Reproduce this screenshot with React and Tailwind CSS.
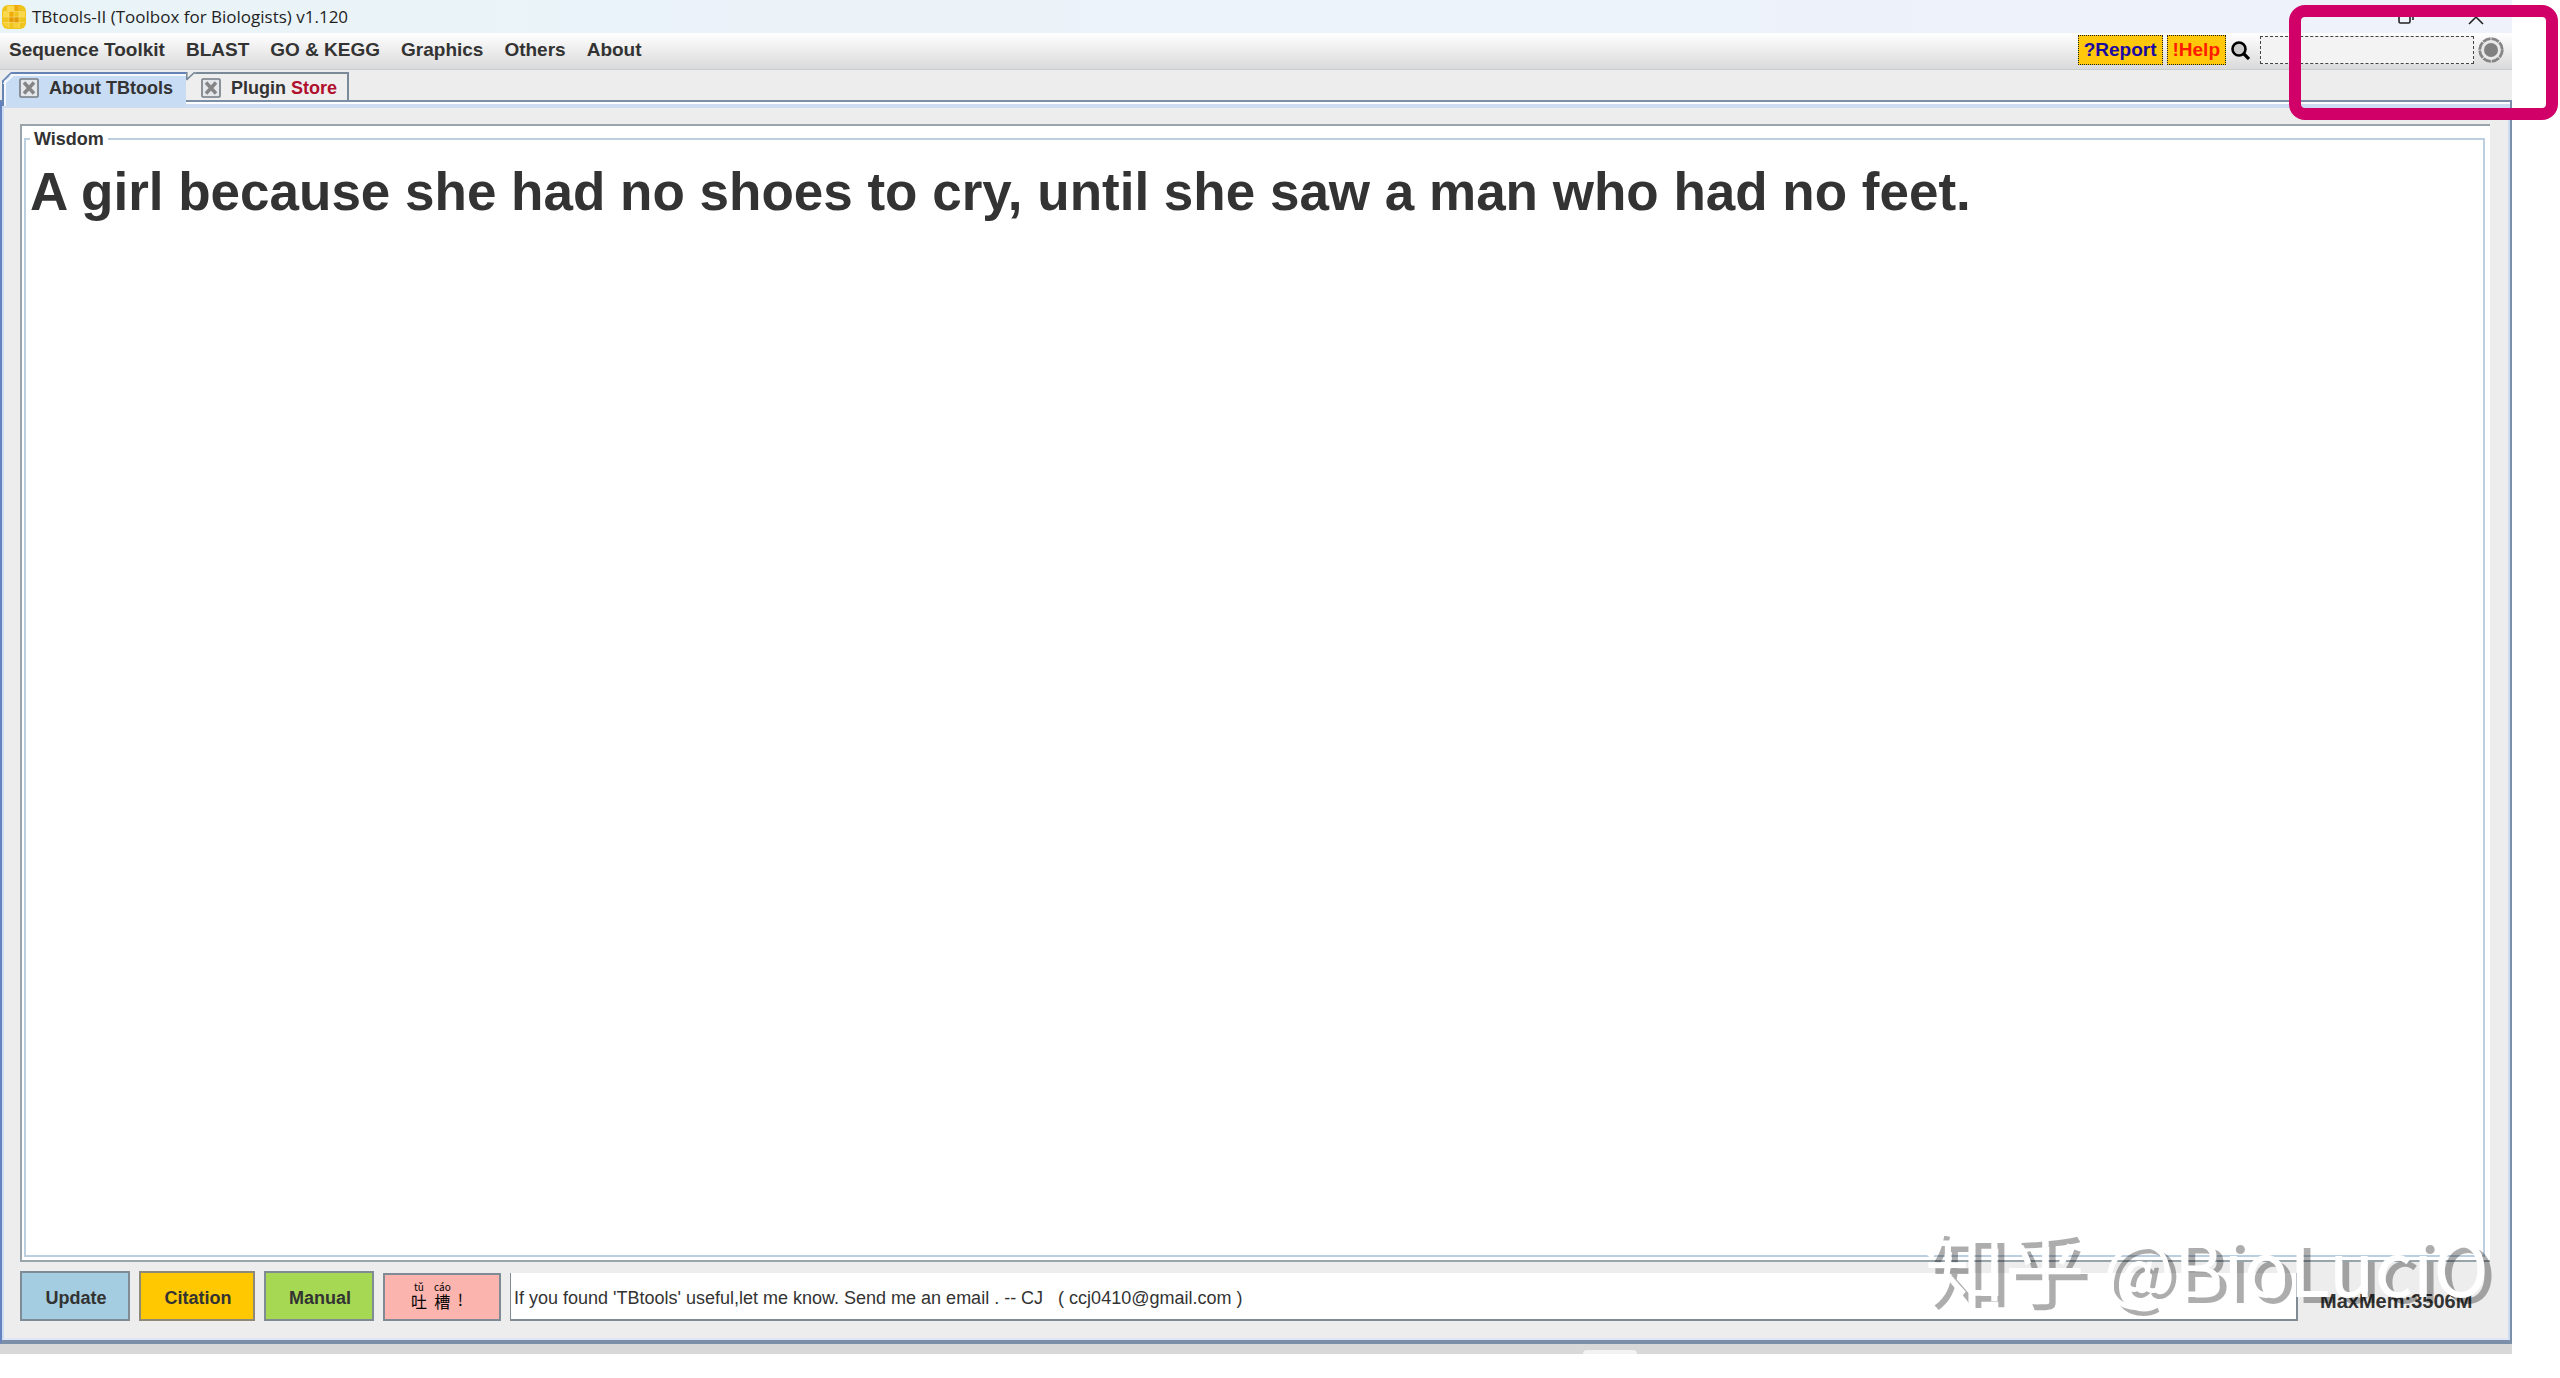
import React from 'react';

const menus = ['Sequence Toolkit', 'BLAST', 'GO & KEGG', 'Graphics', 'Others', 'About'];

function LogoIcon() {
  return (
    <svg className="h-6 w-6" viewBox="0 0 24 24">
      <rect width="24" height="24" rx="6" fill="#efc41c" />
      <path d="M5 1h7v5H5zM1 7h6v5H1zM17 7h6v5h-6z" fill="#fbd84a" />
      <path d="M12 0h6v6h-6zM7 6h5v6H7z" fill="#f0ab08" />
      <path d="M12 12h5v6h-5zM7 12h5v5H7z" fill="#e39a06" />
      <path d="M1 17h6v5H5q-4 0-4-5zM12 18h6v5h-6z" fill="#f7cf30" />
      <path d="M7 1v22M12 1v22M17 1v22M1 6.500h22M1 12h22M1 17.500h22" stroke="#f9df7c" strokeWidth="0.6" />
    </svg>
  );
}

function CloseIcon() {
  return (
    <svg className="h-5 w-5" viewBox="0 0 20 20" fill="none">
      <rect x="1" y="1" width="18" height="18" rx="1" fill="#e4e8ec" stroke="#747b82" strokeWidth="1.6" />
      <path d="M5 4.500l10 11M15 4.500L5 15.500" stroke="#858585" strokeWidth="3.4" />
    </svg>
  );
}

function TitleBar() {
  return (
    <header className="flex h-[33px] items-center justify-between bg-linear-to-r from-[#e9f4f8] to-[#eff2fb] pl-0.5">
      <div className="flex items-center gap-1.5">
        <LogoIcon />
        <h1 className="font-['Open_Sans','Noto_Sans',sans-serif] text-[17px] text-[#1f1f1f]">
          TBtools-II (Toolbox for Biologists) v1.120
        </h1>
      </div>
      <div className="flex gap-[54px] pr-7">
        <button aria-label="Restore">
          <svg className="h-4 w-4" viewBox="0 0 16 16" fill="none" stroke="#222" strokeWidth="1.6">
            <rect x="1" y="3" width="11" height="11" rx="1.5" />
            <path d="M4 1h8q3 0 3 3v7" />
          </svg>
        </button>
        <button aria-label="Close">
          <svg className="h-4 w-4" viewBox="0 0 16 16" fill="none" stroke="#222" strokeWidth="1.6">
            <path d="M1 1l14 14M15 1L1 15" />
          </svg>
        </button>
      </div>
    </header>
  );
}

function MenuBar() {
  return (
    <nav className="flex h-[37px] items-center justify-between border-b border-[#c8cdd2] bg-linear-to-b from-white to-[#dadada] pr-2 pb-0.5 pl-[9px] text-[19px] leading-7 font-bold">
      <div className="flex gap-[21px]">
        {menus.map((name) => (
          <button key={name}>{name}</button>
        ))}
      </div>
      <div className="flex items-center gap-1">
        <button className="border border-dotted border-[#222] bg-[#ffc80a] px-[5px] text-[#1a0aa0]">?Report</button>
        <button className="border border-dotted border-[#222] bg-[#ffc80a] px-[5px] text-[#ff1a00]">!Help</button>
        <label htmlFor="search" aria-label="Search" className="mr-1.5">
          <svg className="h-5 w-5" viewBox="0 0 20 20" fill="none">
            <circle cx="9" cy="9" r="6.5" fill="#ccc" stroke="#000" strokeWidth="2.6" />
            <path d="M13 13l6 6" stroke="#000" strokeWidth="3.2" />
          </svg>
        </label>
        <input id="search" className="h-7 w-[214px] border border-dashed border-[#444] bg-[#f3f3f3] px-1" />
        <button aria-label="Record">
          <svg className="h-[26px] w-[26px]" viewBox="0 0 26 26" fill="none">
            <circle cx="13" cy="13" r="11.3" fill="#e8e8e8" stroke="#858585" strokeWidth="2.8" strokeDasharray="8 0.9" />
            <circle cx="13" cy="13" r="7" fill="#808080" />
          </svg>
        </button>
      </div>
    </nav>
  );
}

function Tabs() {
  return (
    <div role="tablist" className="flex items-start pt-0.5 pl-0.5 text-[18px] font-bold">
      {/* the selected tab runs over the panel's top line */}
      <button
        role="tab"
        aria-selected="true"
        className="relative z-10 -mb-1.5 flex h-[34px] w-[184px] items-center gap-2.5 border-t-2 border-l-2 border-[#6482b4] bg-[#c8dcf3] pb-1 pl-[15px] shadow-[inset_2px_2px_0_#f4f8fd]"
      >
        <svg className="absolute -top-0.5 -left-0.5 h-3 w-3" viewBox="0 0 12 12">
          <path d="M0 0h10L0 9z" fill="#ededed" />
          <path d="M1.500 12L12 2.500" stroke="#f4f8fd" strokeWidth="2" />
          <path d="M0.500 9.500L9.500 0.500" stroke="#6482b4" strokeWidth="1.6" />
        </svg>
        <CloseIcon />
        About TBtools
      </button>
      <button
        role="tab"
        aria-selected="false"
        className="relative flex h-7 w-[163px] items-center gap-2.5 border-t-2 border-r-2 border-[#7a8a99] bg-[#eeeeee] pt-0.5 pl-[15px]"
      >
        <svg className="absolute -top-0.5 left-0 h-2.5 w-2.5" viewBox="0 0 10 10">
          <path d="M0 0h10L0 10z" fill="#ededed" />
          <path d="M0.500 8L9 0M0.800 0v8" stroke="#7a8a99" strokeWidth="1.6" />
        </svg>
        <CloseIcon />
        <span>
          Plugin <span className="text-[#b0102e]">Store</span>
        </span>
      </button>
    </div>
  );
}

function Footer() {
  return (
    <footer className="flex items-end text-[18px]">
      <div className="flex items-end gap-[9px] font-bold">
        <button className="h-[50px] w-[110px] border-2 border-[#7f8b95] bg-[#a4cde1] pt-1 pl-0.5">Update</button>
        <button className="h-[50px] w-[116px] border-2 border-[#8f8a78] bg-[#ffc800] pt-1 pl-0.5">Citation</button>
        <button className="h-[50px] w-[110px] border-2 border-[#7f8b95] bg-[#a6d854] pt-1 pl-0.5">Manual</button>
        <button className="flex h-12 w-[118px] items-center gap-[7px] border-2 border-[#7f8b95] bg-[#fbb4ae] pb-1 pl-[26px] font-['Noto_Sans_CJK_SC',sans-serif] text-[16px] leading-4 font-normal text-black">
          <ruby>
            吐<rt className="text-[10px] leading-[10px]">tǔ</rt>
          </ruby>
          <ruby>
            槽<rt className="text-[10px] leading-[10px]">cáo</rt>
          </ruby>
          <span className="pt-2">!</span>
        </button>
      </div>
      <input
        aria-label="Message"
        readOnly
        defaultValue="If you found 'TBtools' useful,let me know. Send me an email . -- CJ   ( ccj0410@gmail.com )"
        className="ml-[9px] h-12 min-w-0 flex-1 border-r-2 border-b-2 border-l border-[#7f8b95] bg-white pt-1 pl-[3px] outline-none"
      />
      <span className="w-[192px] pb-1.5 pl-[22px] text-[20px] leading-7 font-bold">MaxMem:3506M</span>
    </footer>
  );
}

function App() {
  return (
    <div className="relative flex min-h-screen flex-col overflow-hidden bg-white pr-12 pb-6 font-['Liberation_Sans',Arial,sans-serif] text-[#333]">
      <TitleBar />
      <MenuBar />
      <div className="flex flex-1 flex-col bg-[#ededed]">
        <Tabs />
        <main className="flex flex-1 flex-col border-2 border-b-4 border-[#7b8fa8] border-l-[#6482bf] bg-white pt-0.5">
          <div className="flex flex-1 flex-col border-t-4 border-r-2 border-b-2 border-l-2 border-[#cddcf0] border-b-[#e0e6f6] bg-[#ededed] pt-4 pr-[18px] pb-[17px] pl-4">
            <section className="mb-[9px] flex flex-1 flex-col border-t-2 border-b-2 border-l-2 border-[#9aa4ab] bg-white px-0.5 pt-0.5 pb-[3px]">
              <fieldset className="mr-[3px] flex-1 border-2 border-[#bccfe0] px-1">
                <legend className="px-1 text-[18px] leading-[22px] font-bold">Wisdom</legend>
                <p className="pt-2.5 text-[53px] leading-[64px] font-bold">
                  A girl because she had no shoes to cry, until she saw a man who had no feet.
                </p>
              </fieldset>
            </section>
            <Footer />
          </div>
        </main>
      </div>
      <div className="flex h-[10px] items-end bg-[#d8d8d8]">
        <div className="ml-[63%] h-1 w-[54px] rounded-t bg-[#f2f2f2]" />
      </div>

      <div className="absolute top-[5px] right-0.5 h-[115px] w-[269px] rounded-2xl border-[12px] border-[#d00068]" />
      <div className="absolute right-[71px] bottom-[63px] font-['Noto_Sans_CJK_SC',sans-serif] text-[75px] leading-[100px] whitespace-pre text-white [text-shadow:7px_6px_0_rgba(0,0,0,0.32)]">
        <span className="text-[80px]">知乎 </span>@BioLuciO
      </div>
    </div>
  );
}

export default App;
